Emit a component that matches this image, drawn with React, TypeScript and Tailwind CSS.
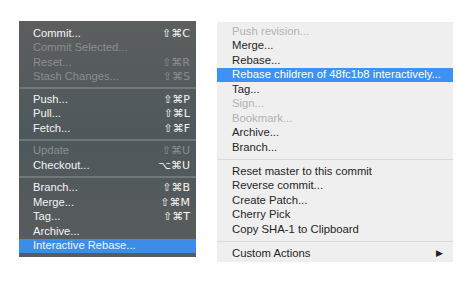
import React from "react";

type Item = { label: string; key?: string; off?: boolean; on?: boolean; sub?: boolean };

const leftGroups: Item[][] = [
  [
    { label: "Commit...", key: "⇧⌘C" },
    { label: "Commit Selected...", off: true },
    { label: "Reset...", key: "⇧⌘R", off: true },
    { label: "Stash Changes...", key: "⇧⌘S", off: true },
  ],
  [
    { label: "Push...", key: "⇧⌘P" },
    { label: "Pull...", key: "⇧⌘L" },
    { label: "Fetch...", key: "⇧⌘F" },
  ],
  [
    { label: "Update", key: "⇧⌘U", off: true },
    { label: "Checkout...", key: "⌥⌘U" },
  ],
  [
    { label: "Branch...", key: "⇧⌘B" },
    { label: "Merge...", key: "⇧⌘M" },
    { label: "Tag...", key: "⇧⌘T" },
    { label: "Archive..." },
    { label: "Interactive Rebase...", on: true },
  ],
];

const rightGroups: Item[][] = [
  [
    { label: "Push revision...", off: true },
    { label: "Merge..." },
    { label: "Rebase..." },
    { label: "Rebase children of 48fc1b8 interactively...", on: true },
    { label: "Tag..." },
    { label: "Sign...", off: true },
    { label: "Bookmark...", off: true },
    { label: "Archive..." },
    { label: "Branch..." },
  ],
  [
    { label: "Reset master to this commit" },
    { label: "Reverse commit..." },
    { label: "Create Patch..." },
    { label: "Cherry Pick" },
    { label: "Copy SHA-1 to Clipboard" },
  ],
  [{ label: "Custom Actions", sub: true }],
];

const font = { fontFamily: "'Liberation Sans', Arial, sans-serif" };

function DarkMenu() {
  return (
    <div className="w-[177px] pt-[5px] pb-[4px] bg-linear-to-b from-[#5c5e5e] via-[#4e585c] to-[#5a5c5c]">
      {leftGroups.map((group, gi) => (
        <div key={gi}>
          {gi > 0 && (
            <div className="h-[8px] flex items-center">
              <div className="h-[2px] w-full bg-[#72777a]" />
            </div>
          )}
          {group.map((it) => (
            <div
              key={it.label}
              className={
                "h-[14.5px] flex items-center justify-between whitespace-nowrap pl-[14px] pr-[6px] text-[11.2px] leading-none " +
                (it.on ? "bg-[#3d8de8] text-[#eef5ff]" : it.off ? "text-[#8b8e8f]" : "text-[#f4f4f4]")
              }
            >
              <span>{it.label}</span>
              {it.key && (
                <span className="text-[11px]" style={{ fontFamily: "'DejaVu Sans', sans-serif" }}>
                  {it.key}
                </span>
              )}
            </div>
          ))}
        </div>
      ))}
    </div>
  );
}

function LightMenu() {
  return (
    <div className="w-[236px] pt-[2px] pb-[1.5px] bg-[#efefef]">
      {rightGroups.map((group, gi) => (
        <div key={gi}>
          {gi > 0 && (
            <div className="h-[9.5px] flex items-center">
              <div className="h-px w-full bg-[#d9d9d9]" />
            </div>
          )}
          {group.map((it) => (
            <div
              key={it.label}
              className={
                "h-[14.5px] flex items-center justify-between whitespace-nowrap pl-[15px] pr-[10px] text-[11.3px] leading-none " +
                (it.on ? "bg-[#3e92f6] text-white" : it.off ? "text-[#b2b2b2]" : "text-[#262626]")
              }
            >
              <span>{it.label}</span>
              {it.sub && <span className="text-[9px] text-[#222]">▶</span>}
            </div>
          ))}
        </div>
      ))}
    </div>
  );
}

export default function App() {
  return (
    <div className="w-[474px] h-[294px] bg-white flex items-start gap-[21px] pl-[19px] pt-[21px]" style={font}>
      <DarkMenu />
      <div className="mt-[1px]">
        <LightMenu />
      </div>
    </div>
  );
}
